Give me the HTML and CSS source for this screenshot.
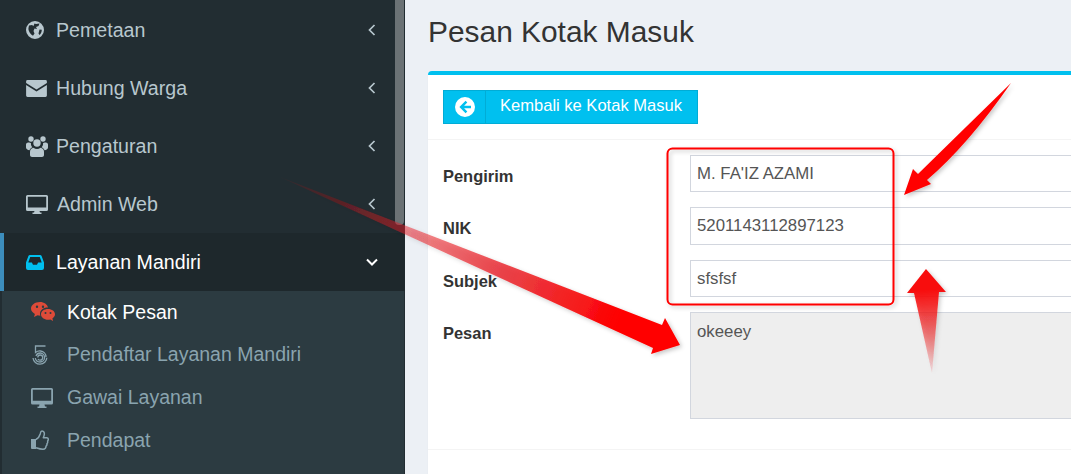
FILE: index.html
```html
<!DOCTYPE html>
<html lang="en">
<head>
    <meta charset="UTF-8">
    <meta name="viewport" content="width=device-width, initial-scale=1.0">
    <title>Pesan Kotak Masuk</title>
    <link rel="stylesheet" href="styles.css">
</head>
<body>
    <aside class="sidebar">
        <div class="scroll-thumb"></div>
        <ul class="menu">
            <li class="menu-item">
                <svg class="icon" viewBox="0 0 18 18"><path fill="currentColor" fill-rule="evenodd" d="M9 0a9 9 0 1 0 0 18A9 9 0 0 0 9 0zM3 4.500l3-.5 1.500 1 1-2.500 1.500.5 3.500-.5-1 2.500-2.500 1 1 2-2.500-.5-1 2.500 1 2.500-1.500 2.200C4.500 13.500 2.500 10 2.400 8 2.500 6.800 2.700 5.500 3 4.500zM13.500 8.500l2.300.3c0 2-.9 4-2.300 5.200l-1-1.500.5-2z"/></svg>
                <span class="menu-label">Pemetaan</span>
                <svg class="chevron" viewBox="0 0 8 12"><path d="M6.500 1 1.500 6l5 5"/></svg>
            </li>
            <li class="menu-item">
                <svg class="icon icon-mail" viewBox="0 0 22 18"><path fill="currentColor" d="M1.500 0h19A1.500 1.500 0 0 1 22 1.500v1.700L11 10 0 3.200V1.500A1.500 1.500 0 0 1 1.500 0zM0 5.300l11 6.900 11-6.900v11.200a1.500 1.500 0 0 1-1.500 1.500h-19A1.500 1.500 0 0 1 0 16.500z"/></svg>
                <span class="menu-label">Hubung Warga</span>
                <svg class="chevron" viewBox="0 0 8 12"><path d="M6.500 1 1.500 6l5 5"/></svg>
            </li>
            <li class="menu-item">
                <svg class="icon icon-users" viewBox="0 0 22 21"><g fill="currentColor"><circle cx="5" cy="3" r="2.700"/><circle cx="17" cy="3" r="2.700"/><circle cx="11" cy="7" r="3.700"/><path d="M0 8.500C0 7 1.500 6.500 3 6.500c.8 0 1.500.3 2 .8-.3 1.700.4 3 1.500 4-1.500.8-2.500 1.500-3 3C1.500 14 0 13 0 11.500zM22 8.500c0-1.500-1.500-2-3-2-.8 0-1.500.3-2 .8.300 1.700-.4 3-1.500 4 1.500.8 2.500 1.500 3 3 2-.3 3.500-1.300 3.500-2.800z"/><path d="M7.500 11.800c1 .8 2.200 1.200 3.500 1.200s2.500-.4 3.500-1.200c2 .2 3.500 1.700 3.500 4V19c0 1-1 2-2 2H6c-1 0-2-1-2-2v-3.200c0-2.300 1.500-3.800 3.500-4z"/></g></svg>
                <span class="menu-label">Pengaturan</span>
                <svg class="chevron" viewBox="0 0 8 12"><path d="M6.500 1 1.500 6l5 5"/></svg>
            </li>
            <li class="menu-item">
                <svg class="icon icon-wide" viewBox="0 0 22 19"><path fill="currentColor" fill-rule="evenodd" d="M1.500 0h19A1.500 1.500 0 0 1 22 1.500v13a1.500 1.500 0 0 1-1.500 1.500H13.500l.5 1.500h1.500V19h-9v-1.500H8l.5-1.500H1.500A1.500 1.500 0 0 1 0 14.500v-13A1.500 1.500 0 0 1 1.500 0zM1.800 1.800v10.700h18.400V1.800z"/></svg>
                <span class="menu-label">Admin Web</span>
                <svg class="chevron" viewBox="0 0 8 12"><path d="M6.500 1 1.500 6l5 5"/></svg>
            </li>
            <li class="menu-item active">
                <svg class="icon icon-inbox" viewBox="0 0 18 15"><path fill="currentColor" fill-rule="evenodd" d="M4 0h10c.8 0 1.300.4 1.600 1L18 7.500V13a2 2 0 0 1-2 2H2a2 2 0 0 1-2-2V7.500L2.400 1C2.700.4 3.200 0 4 0zM4.200 2 2.300 7.500h3.600L7 9.800h4l1.100-2.300h3.600L13.800 2z"/></svg>
                <span class="menu-label">Layanan Mandiri</span>
                <svg class="chevron chevron-down" viewBox="0 0 12 8"><path d="M1 1.500l5 5 5-5"/></svg>
            </li>
            <li>
                <ul class="submenu">
                    <li class="submenu-item current">
                        <svg class="icon icon-wechat" viewBox="0 0 24 20"><path fill="currentColor" fill-rule="evenodd" d="M9 0c4 0 7.400 2.300 8 5.600-4.300-.2-8 2.500-8 6.200 0 .7.100 1.300.3 1.900-1 0-2-.1-2.800-.4L3 15l.9-3C1.500 10.700 0 8.900 0 6.600 0 2.900 4 0 9 0zM6 3.500a1.200 1.200 0 1 0 0 2.400 1.200 1.200 0 0 0 0-2.400zm6 0a1.200 1.200 0 1 0 0 2.400 1.200 1.200 0 0 0 0-2.400zM17 7c3.900 0 7 2.400 7 5.300 0 1.700-1 3.100-2.600 4.200l.7 2.500-2.800-1.500c-.7.200-1.500.3-2.300.3-3.900 0-7-2.400-7-5.500S13.100 7 17 7zm-2.500 3a1 1 0 1 0 0 2 1 1 0 0 0 0-2zm5 0a1 1 0 1 0 0 2 1 1 0 0 0 0-2z"/></svg>
                        <span class="menu-label">Kotak Pesan</span>
                    </li>
                    <li class="submenu-item">
                        <svg class="icon icon-five" viewBox="0 0 16 20"><g fill="none" stroke="currentColor" stroke-width="1.300"><path d="M13.500 1H3.500v6.500C5 6.300 6.700 5.800 8.500 6c3.200.3 5.500 2.800 5.500 6"/><path d="M1 13c.5 3.500 3.400 6.200 7 6.200 3.700 0 6.700-2.900 6.800-6.500"/><path d="M3.300 13c.4 2.300 2.300 4 4.700 4 2.700 0 4.600-2.100 4.600-4.500S10.700 8 8.300 8C6.300 8 4.500 9.300 4 11"/><path d="M6 14c.5.800 1.300 1.200 2.200 1.200 1.500 0 2.500-1.200 2.500-2.700s-1.100-2.500-2.500-2.500-2.400 1-2.400 2.500"/></g></svg>
                        <span class="menu-label">Pendaftar Layanan Mandiri</span>
                    </li>
                    <li class="submenu-item">
                        <svg class="icon icon-wide" viewBox="0 0 22 20"><path fill="currentColor" fill-rule="evenodd" d="M1.500 0h19A1.500 1.500 0 0 1 22 1.500v13.500a1.500 1.500 0 0 1-1.500 1.500H13.500l.5 2h1.500V20h-9v-1.500H8l.5-2H1.500A1.500 1.500 0 0 1 0 15V1.500A1.500 1.500 0 0 1 1.500 0zM1.800 1.800v11h18.400v-11z"/></svg>
                        <span class="menu-label">Gawai Layanan</span>
                    </li>
                    <li class="submenu-item">
                        <svg class="icon icon-thumb" viewBox="0 0 18 20"><g fill="none" stroke="currentColor" stroke-width="1.500" stroke-linejoin="round"><path d="M5 9.500c2-1 3.500-3 4.200-5.500.3-1.200.3-3 1.800-3 2 0 2.500 2 2.300 3.500-.1 1-.6 2.300-1 3.200h3.500c1 0 1.500.9 1.500 1.800 0 .7-.3 1.200-.7 1.600.3 1.200 0 2-.7 2.600.2 1-.1 1.900-.9 2.400.1 1.500-.8 3.100-3 3.100-2.500 0-4.300-.6-7-1.500"/></g><path fill="currentColor" d="M0 9h5v10H1a1 1 0 0 1-1-1z"/></svg>
                        <span class="menu-label">Pendapat</span>
                    </li>
                </ul>
            </li>
        </ul>
    </aside>

    <main class="content">
        <h1 class="page-title">Pesan Kotak Masuk</h1>
        <section class="box">
            <div class="box-header">
                <a class="btn-back">
                    <span class="btn-icon">
                        <svg viewBox="0 0 20 20" width="20" height="20"><path fill="#fff" fill-rule="evenodd" d="M10 0a10 10 0 1 1 0 20 10 10 0 0 1 0-20zM10.600 3.800 4.400 10l6.200 6.200 1.700-1.700-3.200-3.200H16V8.700H9.100l3.200-3.200z"/></svg>
                    </span>
                    <span class="btn-text">Kembali ke Kotak Masuk</span>
                </a>
            </div>
            <form class="box-body">
                <label class="field-label">Pengirim</label>
                <input class="field-input" type="text" value="M. FA'IZ AZAMI" readonly>
                <label class="field-label">NIK</label>
                <input class="field-input" type="text" value="5201143112897123" readonly>
                <label class="field-label label-low">Subjek</label>
                <input class="field-input input-low" type="text" value="sfsfsf" readonly>
                <label class="field-label label-top">Pesan</label>
                <textarea class="field-input field-area" readonly>okeeey</textarea>
            </form>
            <div class="box-footer"></div>
        </section>
    </main>

    <!-- Red markup drawn over the screenshot -->
    <svg class="markup" viewBox="0 0 1071 474" width="1071" height="474">
        <defs>
            <filter id="soft" x="-20%" y="-20%" width="140%" height="140%">
                <feDropShadow dx="2" dy="2" stdDeviation="2" flood-color="#000" flood-opacity="0.22"/>
            </filter>
            <linearGradient id="longFade" gradientUnits="userSpaceOnUse" x1="280" y1="177" x2="680" y2="345">
                <stop offset="0" stop-color="#f00" stop-opacity="0.05"/>
                <stop offset="0.3" stop-color="#e81c24" stop-opacity="0.45"/>
                <stop offset="0.55" stop-color="#e81c24" stop-opacity="0.78"/>
                <stop offset="0.85" stop-color="#f00"/>
            </linearGradient>
            <linearGradient id="upFade" gradientUnits="userSpaceOnUse" x1="926" y1="269" x2="932" y2="373">
                <stop offset="0.2" stop-color="#f80f0f"/>
                <stop offset="1" stop-color="#e81c24" stop-opacity="0.1"/>
            </linearGradient>
        </defs>
        <rect class="markup-box" x="667.500" y="148.500" width="226" height="156" rx="5" filter="url(#soft)"/>
        <path fill="#f00" filter="url(#soft)" d="M1011 83Q968 145 927 180L931 184L904 195L913 169L918 174Q968 125 1011 83z"/>
        <path fill="url(#longFade)" filter="url(#soft)" d="M280 177L662 325L665 318L680 345L651 354L653 348z"/>
        <path fill="url(#upFade)" filter="url(#soft)" d="M926 269L946 292L939 292L932 373L914 293L907 293z"/>
    </svg>
</body>
</html>
```

FILE: styles.css
```css
* {
    box-sizing: border-box;
}
html, body {
    margin: 0;
    height: 100%;
    overflow: hidden;
}
body {
    position: relative;
    display: flex;
    width: 1071px;
    height: 474px;
    background-color: #ecf0f5;
    font-family: "Liberation Sans", Arial, sans-serif;
    color: #333;
}

/* Sidebar */
.sidebar {
    position: relative;
    flex: 0 0 405px;
    background-color: #222d32;
    padding-top: 1px;
    overflow: hidden;
}
.scroll-thumb {
    position: absolute;
    top: 0;
    right: 1px;
    width: 9px;
    height: 225px;
    background-color: #6b7275;
    border-radius: 0 0 4px 4px;
}
.menu, .submenu {
    list-style: none;
    margin: 0;
    padding: 0;
}
.menu-item {
    display: flex;
    align-items: center;
    height: 58px;
    padding-left: 26px;
    color: #b8c7ce;
    font-size: 19.6px;
}
.menu-item.active {
    background-color: #1e282c;
    border-left: 4px solid #3c8dbc;
    padding-left: 22px;
    color: #fff;
}
.icon {
    flex: 0 0 auto;
    width: 18px;
    height: 18px;
    margin-right: 12px;
}
.menu-item .icon-mail {
    width: 21px;
    height: 17px;
    margin-right: 9px;
}
.menu-item .icon-wide {
    width: 22px;
    height: 19px;
    margin-right: 9px;
}
.menu-item .icon-users {
    width: 22px;
    height: 21px;
    margin-right: 8px;
}
.menu-label {
    flex: 1;
}
.chevron {
    width: 8px;
    height: 12px;
    margin-right: 29px;
    fill: none;
    stroke: currentColor;
    stroke-width: 1.700;
}
.chevron-down {
    width: 12px;
    height: 8px;
    margin-right: 27px;
    stroke-width: 2;
}
.icon-inbox {
    height: 15px;
    color: #00c0ef;
}
.submenu {
    background-color: #2c3b41;
    border-left: 2px solid #222d32;
    border-right: 1px solid #222d32;
    padding-bottom: 20px;
}
.submenu-item {
    display: flex;
    align-items: center;
    height: 42.670px;
    padding-left: 29px;
    color: #8aa4af;
    font-size: 19.5px;
}
.submenu-item .icon {
    width: 36px;
    padding-right: 14px;
    margin: 0;
}
.submenu-item.current {
    color: #fff;
}
.submenu-item .icon-wechat {
    width: 36px;
    height: 20px;
    padding-right: 12px;
    color: #dd4b39;
}
.submenu-item .icon-five {
    width: 36px;
    height: 20px;
    padding-left: 1px;
    padding-right: 19px;
}
.submenu-item .icon-wide {
    height: 20px;
    width: 36px;
    padding-right: 14px;
}
.submenu-item .icon-thumb {
    height: 20px;
    width: 36px;
    padding-right: 18px;
}

/* Main column */
.content {
    flex: 1;
    min-width: 0;
    padding-left: 23px;
}
.page-title {
    margin: 0;
    height: 71px;
    padding-top: 14px;
    font-size: 29.9px;
    line-height: 35px;
    font-weight: 400;
    white-space: nowrap;
}
.box {
    height: 403px;
    background-color: #fff;
    border-top: 4px solid #00c0ef;
    border-radius: 4px 0 0 0;
    box-shadow: 0 1px 1px rgba(0, 0, 0, 0.1);
}
.box-header {
    padding: 15px;
    border-bottom: 1px solid #f4f4f4;
}
.btn-back {
    display: flex;
    width: 255px;
    height: 34px;
    background-color: #00c0ef;
    border: 1px solid #00acd6;
    color: #fff;
}
.btn-icon {
    display: flex;
    align-items: center;
    justify-content: center;
    width: 42px;
    border-right: 1px solid #00acd6;
}
.btn-text {
    padding-left: 14px;
    font-size: 16.55px;
    line-height: 30px;
    white-space: nowrap;
}
.box-body {
    display: grid;
    grid-template-columns: 247px 1fr;
    grid-auto-rows: auto;
    row-gap: 15px;
    padding: 15px 0 15px 15px;
}
.field-label {
    align-self: center;
    font-size: 16.47px;
    font-weight: 700;
    padding-top: 5px;
}
.label-low {
    padding-top: 7px;
}
.label-top {
    align-self: start;
    padding-top: 12px;
}
.field-input {
    display: block;
    width: 100%;
    height: 37.330px;
    padding: 0 6px;
    border: 1px solid #d2d6de;
    border-right: 0;
    outline: none;
    background-color: #fff;
    color: #555;
    font-family: "Liberation Sans", Arial, sans-serif;
    font-size: 16.8px;
}
.input-low {
    padding-top: 2px;
}
.field-area {
    height: 107px;
    padding-top: 9px;
    resize: none;
    background-color: #eee;
}
.box-footer {
    margin-top: 15px;
    border-top: 1px solid #f4f4f4;
}

/* Annotations over the page */
.markup {
    position: absolute;
    top: 0;
    left: 0;
    pointer-events: none;
}
.markup-box {
    fill: none;
    stroke: #f00;
    stroke-width: 2;
}
```
